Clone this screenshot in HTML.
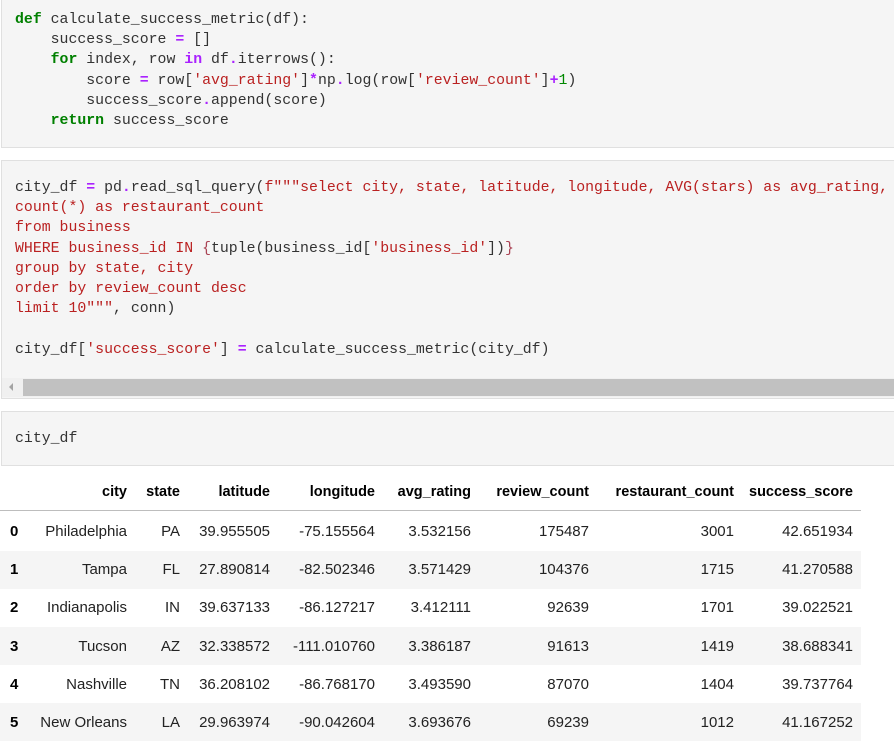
<!DOCTYPE html>
<html><head><meta charset="utf-8"><style>
body{margin:0;width:894px;height:747px;background:#fff;overflow:hidden;position:relative;font-family:"Liberation Sans",sans-serif;}
.cell{position:absolute;left:1px;background:#f5f5f5;border:1px solid #e0e0e0;box-sizing:border-box;}
pre{margin:0;position:absolute;left:15px;font-family:"Liberation Mono",monospace;font-size:14.85px;line-height:20.2px;color:#333;}
.k{color:#008000;font-weight:bold}.s{color:#ba2121}.o{color:#aa22ff;font-weight:bold}.n{color:#080}
.t{position:absolute;font-size:15px;color:#222;white-space:nowrap;}
.h{font-weight:bold;font-size:14.5px;color:#000}
.ix{font-weight:bold;color:#000}
.stripe{position:absolute;left:0;width:861px;height:38px;background:#f5f5f5}
</style></head><body>
<div class="cell" style="top:-1px;width:895px;height:149px"></div>
<pre style="top:10px"><span class="k">def</span> calculate_success_metric(df):
    success_score <span class="o">=</span> []
    <span class="k">for</span> index, row <span class="o">in</span> df<span class="o">.</span>iterrows():
        score <span class="o">=</span> row[<span class="s">'avg_rating'</span>]<span class="o">*</span>np<span class="o">.</span>log(row[<span class="s">'review_count'</span>]<span class="o">+</span><span class="n">1</span>)
        success_score<span class="o">.</span>append(score)
    <span class="k">return</span> success_score</pre>
<div class="cell" style="top:160px;width:895px;height:239px"></div>
<pre style="top:178px">city_df <span class="o">=</span> pd<span class="o">.</span>read_sql_query(<span class="s">f"""select city, state, latitude, longitude, AVG(stars) as avg_rating,
count(*) as restaurant_count
from business
WHERE business_id IN </span><span style="color:#a45">{</span>tuple(business_id[<span class="s">'business_id'</span>])<span style="color:#a45">}</span><span class="s">
group by state, city
order by review_count desc
limit 10"""</span>, conn)

city_df[<span class="s">'success_score'</span>] <span class="o">=</span> calculate_success_metric(city_df)</pre>
<div style="position:absolute;left:2px;top:378px;width:892px;height:19px;background:#f0f0f0"></div>
<div style="position:absolute;left:23px;top:379px;width:871px;height:17px;background:#c1c1c1"></div>
<div style="position:absolute;left:9px;top:383px;width:0;height:0;border-top:4px solid transparent;border-bottom:4px solid transparent;border-right:4px solid #a3a3a3"></div>
<div class="cell" style="top:411px;width:895px;height:55px"></div>
<pre style="top:429px">city_df</pre>
<div style="position:absolute;left:0;top:510px;width:861px;height:1px;background:#bdbdbd"></div>
<div class="stripe" style="top:551px"></div>
<div class="stripe" style="top:627px"></div>
<div class="stripe" style="top:703px"></div>
<div id="tbl"></div>
<script>
var R=[127,180,270,375,471,589,734,853];
var H=["city","state","latitude","longitude","avg_rating","review_count","restaurant_count","success_score"];
var D=[["Philadelphia","PA","39.955505","-75.155564","3.532156","175487","3001","42.651934"],
["Tampa","FL","27.890814","-82.502346","3.571429","104376","1715","41.270588"],
["Indianapolis","IN","39.637133","-86.127217","3.412111","92639","1701","39.022521"],
["Tucson","AZ","32.338572","-111.010760","3.386187","91613","1419","38.688341"],
["Nashville","TN","36.208102","-86.768170","3.493590","87070","1404","39.737764"],
["New Orleans","LA","29.963974","-90.042604","3.693676","69239","1012","41.167252"]];
var h="";
function cell(txt,right,y,cls){return '<div class="t '+cls+'" style="right:'+(894-right)+'px;top:'+(y-9)+'px">'+txt+'</div>';}
for(var i=0;i<8;i++)h+=cell(H[i],R[i],493,"h");
for(var r=0;r<6;r++){var y=532+r*38.2;
h+='<div class="t ix" style="left:10px;top:'+(y-9)+'px">'+r+'</div>';
for(var i=0;i<8;i++)h+=cell(D[r][i],R[i],y,"");}
document.getElementById("tbl").innerHTML=h;
</script>
</body></html>
